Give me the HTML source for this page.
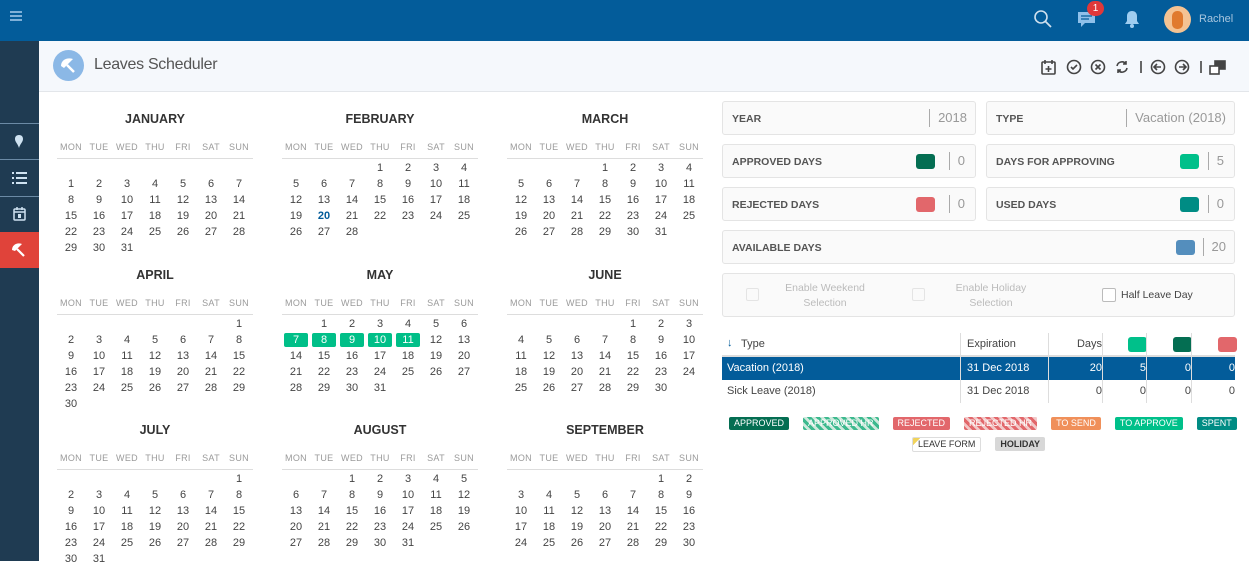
<!DOCTYPE html>
<html><head><meta charset="utf-8"><style>
*{box-sizing:border-box;margin:0;padding:0}
body{width:1249px;height:561px;overflow:hidden;background:#fff;font-family:"Liberation Sans",sans-serif;position:relative;color:#444}
.top{position:absolute;left:0;top:0;width:1249px;height:41px;background:#035c9a}
.side{position:absolute;left:0;top:41px;width:39px;height:520px;background:#1f3b52}
.side .sep{position:absolute;left:0;width:39px;height:1px;background:#6b8aa5}
.hdr{position:absolute;left:39px;top:41px;width:1210px;height:51px;background:#f5f8fc;border-bottom:1px solid #e3e6ea}
.m{position:absolute;width:196px}
.m .t{height:18px;line-height:18px;text-align:center;font-weight:bold;font-size:12.5px;color:#333}
.m .h{margin-top:12px;display:grid;grid-template-columns:repeat(7,28px);font-size:9px;color:#9a9a9a;text-align:center;line-height:14px;border-bottom:1px solid #ddd;padding-bottom:4px;height:19px;letter-spacing:.3px}
.m .d{margin-top:1px;display:grid;grid-template-columns:repeat(7,28px);font-size:11px;text-align:center;line-height:16px;color:#444}
.m .d span{height:16px}
.g{background:#00bf88;color:#fff;border-radius:2px;margin:1px 2px;line-height:14px;height:14px!important}
.box{position:absolute;border:1px solid #e4e4e4;border-radius:3px;background:#fafafa;height:34px;font-size:10.5px;font-weight:bold;color:#555;line-height:34px;padding-left:9px}
.box .v{position:absolute;right:8px;font-weight:normal;color:#999;font-size:13px;border-left:1px solid #aaa;line-height:18px;top:7px;padding-left:8px}
.box .sw{position:absolute;top:9px;width:19px;height:15px;border-radius:3px}
.badge{display:inline-block;font-size:9px;color:#fff;padding:0 5px;height:13px;line-height:13px;border-radius:2px;margin:0 7px}
</style></head><body>
<div class="top">
<div style="position:absolute;left:10px;top:11px;width:12px"><div style="height:2px;background:#7fb0d8;margin-bottom:2px"></div><div style="height:2px;background:#7fb0d8;margin-bottom:2px"></div><div style="height:2px;background:#7fb0d8"></div></div>
<svg style="position:absolute;left:1033px;top:9px" width="20" height="20" viewBox="0 0 20 20"><circle cx="8" cy="8" r="6" fill="none" stroke="#cfe0ee" stroke-width="1.6"/><path d="M12.5 12.5L18 18" stroke="#cfe0ee" stroke-width="1.8"/></svg>
<svg style="position:absolute;left:1077px;top:10px" width="20" height="20" viewBox="0 0 20 20"><path d="M1 2h17v11H8l-4 4v-4H1z" fill="#8fc0ea"/><path d="M4 6h11M4 9h8" stroke="#035c9a" stroke-width="1.3"/></svg>
<div style="position:absolute;left:1087px;top:1px;width:17px;height:15px;border-radius:8px;background:#e0383a;color:#fff;font-size:10px;text-align:center;line-height:15px">1</div>
<svg style="position:absolute;left:1124px;top:10px" width="16" height="18" viewBox="0 0 16 18"><path d="M8 1c-3 0-5 2-5 5v5l-2 3h14l-2-3V6c0-3-2-5-5-5z" fill="#9fcdf0"/><circle cx="8" cy="16" r="2" fill="#9fcdf0"/></svg>
<div style="position:absolute;left:1164px;top:6px;width:27px;height:27px;border-radius:50%;background:#f4c393"><div style="position:absolute;left:8px;top:5px;width:11px;height:18px;border-radius:5px;background:#e07a2e"></div></div>
<div style="position:absolute;left:1199px;top:13px;font-size:11px;color:#a8c6df">Rachel</div>
</div>
<div class="side">
<div class="sep" style="top:82px"></div><div class="sep" style="top:118px"></div><div class="sep" style="top:155px"></div>
<div style="position:absolute;left:0;top:191px;width:39px;height:36px;background:#e0433a"></div>
<svg style="position:absolute;left:13px;top:93px" width="12" height="15" viewBox="0 0 12 15"><path d="M6 1C3 1 2 3 2 5c0 3 3 5 4 9 1-4 4-6 4-9 0-2-1-4-4-4z" fill="#cfe2f1"/></svg>
<svg style="position:absolute;left:12px;top:131px" width="15" height="12" viewBox="0 0 15 12"><path d="M0 1h2M4 1h11M0 6h2M4 6h11M0 11h2M4 11h11" stroke="#cfe2f1" stroke-width="2"/></svg>
<svg style="position:absolute;left:13px;top:166px" width="13" height="14" viewBox="0 0 13 14"><rect x="1" y="2" width="11" height="11" rx="1" fill="none" stroke="#cfe2f1" stroke-width="1.5"/><path d="M1 5h11M4 0v3M9 0v3" stroke="#cfe2f1" stroke-width="1.5"/><rect x="5" y="7" width="3" height="4" fill="#cfe2f1"/></svg>
<svg style="position:absolute;left:11px;top:201px" width="16" height="16" viewBox="0 0 16 16"><path d="M1 8C1 3 6 0 11 2L4 9z" fill="#fff"/><path d="M6 7l7 7" stroke="#fff" stroke-width="2.2"/></svg>
</div>
<div class="hdr">
<div style="position:absolute;left:14px;top:9px;width:31px;height:31px;border-radius:50%;background:#8bb8e6"></div>
<svg style="position:absolute;left:20px;top:15px" width="20" height="20" viewBox="0 0 20 20"><path d="M2 10C2 4 8 1 14 3L5 12z" fill="#fff"/><path d="M8 9l7 7" stroke="#fff" stroke-width="2.5"/></svg>
<div style="position:absolute;left:55px;top:15px;font-size:16px;color:#555;letter-spacing:-.3px">Leaves Scheduler</div>
<svg style="position:absolute;left:1001px;top:17px" width="195" height="18" viewBox="0 0 195 18" fill="none" stroke="#444" stroke-width="1.6">
<rect x="2" y="4" width="13" height="12" rx="1"/><path d="M5 2v4M12 2v4M8.5 8v6M5.5 11h6"/>
<circle cx="34" cy="9" r="6.5"/><path d="M31 9l2 2 4-4"/>
<circle cx="58" cy="9" r="6.5"/><path d="M55.5 6.5l5 5M60.5 6.5l-5 5"/>
<path d="M77 8a5 5 0 0 1 9-2M87 10a5 5 0 0 1-9 2M86 3v3h-3M78 15v-3h3"/>
<path d="M101 3v12"/>
<circle cx="118" cy="9" r="6.5"/><path d="M121 9h-6M117 6l-3 3 3 3"/>
<circle cx="142" cy="9" r="6.5"/><path d="M139 9h6M143 6l3 3-3 3"/>
<path d="M161 3v12"/>
<rect x="175" y="3" width="10" height="8" fill="#444"/><rect x="170" y="8" width="9" height="8" fill="#fff"/>
</svg>
</div>

<div class="m" style="left:57px;top:110px"><div class="t">JANUARY</div><div class="h"><span>MON</span><span>TUE</span><span>WED</span><span>THU</span><span>FRI</span><span>SAT</span><span>SUN</span></div><div class="d">
<span></span><span></span><span></span><span></span><span></span><span></span><span></span>
<span>1</span><span>2</span><span>3</span><span>4</span><span>5</span><span>6</span><span>7</span>
<span>8</span><span>9</span><span>10</span><span>11</span><span>12</span><span>13</span><span>14</span>
<span>15</span><span>16</span><span>17</span><span>18</span><span>19</span><span>20</span><span>21</span>
<span>22</span><span>23</span><span>24</span><span>25</span><span>26</span><span>27</span><span>28</span>
<span>29</span><span>30</span><span>31</span></div></div>

<div class="m" style="left:282px;top:110px"><div class="t">FEBRUARY</div><div class="h"><span>MON</span><span>TUE</span><span>WED</span><span>THU</span><span>FRI</span><span>SAT</span><span>SUN</span></div><div class="d">
<span></span><span></span><span></span><span>1</span><span>2</span><span>3</span><span>4</span>
<span>5</span><span>6</span><span>7</span><span>8</span><span>9</span><span>10</span><span>11</span>
<span>12</span><span>13</span><span>14</span><span>15</span><span>16</span><span>17</span><span>18</span>
<span>19</span><span style="color:#035c9a;font-weight:bold">20</span><span>21</span><span>22</span><span>23</span><span>24</span><span>25</span>
<span>26</span><span>27</span><span>28</span></div></div>

<div class="m" style="left:507px;top:110px"><div class="t">MARCH</div><div class="h"><span>MON</span><span>TUE</span><span>WED</span><span>THU</span><span>FRI</span><span>SAT</span><span>SUN</span></div><div class="d">
<span></span><span></span><span></span><span>1</span><span>2</span><span>3</span><span>4</span>
<span>5</span><span>6</span><span>7</span><span>8</span><span>9</span><span>10</span><span>11</span>
<span>12</span><span>13</span><span>14</span><span>15</span><span>16</span><span>17</span><span>18</span>
<span>19</span><span>20</span><span>21</span><span>22</span><span>23</span><span>24</span><span>25</span>
<span>26</span><span>27</span><span>28</span><span>29</span><span>30</span><span>31</span></div></div>

<div class="m" style="left:57px;top:266px"><div class="t">APRIL</div><div class="h"><span>MON</span><span>TUE</span><span>WED</span><span>THU</span><span>FRI</span><span>SAT</span><span>SUN</span></div><div class="d">
<span></span><span></span><span></span><span></span><span></span><span></span><span>1</span>
<span>2</span><span>3</span><span>4</span><span>5</span><span>6</span><span>7</span><span>8</span>
<span>9</span><span>10</span><span>11</span><span>12</span><span>13</span><span>14</span><span>15</span>
<span>16</span><span>17</span><span>18</span><span>19</span><span>20</span><span>21</span><span>22</span>
<span>23</span><span>24</span><span>25</span><span>26</span><span>27</span><span>28</span><span>29</span>
<span>30</span></div></div>

<div class="m" style="left:282px;top:266px"><div class="t">MAY</div><div class="h"><span>MON</span><span>TUE</span><span>WED</span><span>THU</span><span>FRI</span><span>SAT</span><span>SUN</span></div><div class="d">
<span></span><span>1</span><span>2</span><span>3</span><span>4</span><span>5</span><span>6</span>
<span class="g">7</span><span class="g">8</span><span class="g">9</span><span class="g">10</span><span class="g">11</span><span>12</span><span>13</span>
<span>14</span><span>15</span><span>16</span><span>17</span><span>18</span><span>19</span><span>20</span>
<span>21</span><span>22</span><span>23</span><span>24</span><span>25</span><span>26</span><span>27</span>
<span>28</span><span>29</span><span>30</span><span>31</span></div></div>

<div class="m" style="left:507px;top:266px"><div class="t">JUNE</div><div class="h"><span>MON</span><span>TUE</span><span>WED</span><span>THU</span><span>FRI</span><span>SAT</span><span>SUN</span></div><div class="d">
<span></span><span></span><span></span><span></span><span>1</span><span>2</span><span>3</span>
<span>4</span><span>5</span><span>6</span><span>7</span><span>8</span><span>9</span><span>10</span>
<span>11</span><span>12</span><span>13</span><span>14</span><span>15</span><span>16</span><span>17</span>
<span>18</span><span>19</span><span>20</span><span>21</span><span>22</span><span>23</span><span>24</span>
<span>25</span><span>26</span><span>27</span><span>28</span><span>29</span><span>30</span></div></div>

<div class="m" style="left:57px;top:421px"><div class="t">JULY</div><div class="h"><span>MON</span><span>TUE</span><span>WED</span><span>THU</span><span>FRI</span><span>SAT</span><span>SUN</span></div><div class="d">
<span></span><span></span><span></span><span></span><span></span><span></span><span>1</span>
<span>2</span><span>3</span><span>4</span><span>5</span><span>6</span><span>7</span><span>8</span>
<span>9</span><span>10</span><span>11</span><span>12</span><span>13</span><span>14</span><span>15</span>
<span>16</span><span>17</span><span>18</span><span>19</span><span>20</span><span>21</span><span>22</span>
<span>23</span><span>24</span><span>25</span><span>26</span><span>27</span><span>28</span><span>29</span>
<span>30</span><span>31</span></div></div>

<div class="m" style="left:282px;top:421px"><div class="t">AUGUST</div><div class="h"><span>MON</span><span>TUE</span><span>WED</span><span>THU</span><span>FRI</span><span>SAT</span><span>SUN</span></div><div class="d">
<span></span><span></span><span>1</span><span>2</span><span>3</span><span>4</span><span>5</span>
<span>6</span><span>7</span><span>8</span><span>9</span><span>10</span><span>11</span><span>12</span>
<span>13</span><span>14</span><span>15</span><span>16</span><span>17</span><span>18</span><span>19</span>
<span>20</span><span>21</span><span>22</span><span>23</span><span>24</span><span>25</span><span>26</span>
<span>27</span><span>28</span><span>29</span><span>30</span><span>31</span></div></div>

<div class="m" style="left:507px;top:421px"><div class="t">SEPTEMBER</div><div class="h"><span>MON</span><span>TUE</span><span>WED</span><span>THU</span><span>FRI</span><span>SAT</span><span>SUN</span></div><div class="d">
<span></span><span></span><span></span><span></span><span></span><span>1</span><span>2</span>
<span>3</span><span>4</span><span>5</span><span>6</span><span>7</span><span>8</span><span>9</span>
<span>10</span><span>11</span><span>12</span><span>13</span><span>14</span><span>15</span><span>16</span>
<span>17</span><span>18</span><span>19</span><span>20</span><span>21</span><span>22</span><span>23</span>
<span>24</span><span>25</span><span>26</span><span>27</span><span>28</span><span>29</span><span>30</span></div></div>

<div class="box" style="left:722px;top:101px;width:254px">YEAR<span class="v">2018</span></div>
<div class="box" style="left:986px;top:101px;width:249px">TYPE<span class="v">Vacation (2018)</span></div>
<div class="box" style="left:722px;top:144px;width:254px">APPROVED DAYS<span class="sw" style="left:193px;background:#046e52"></span><span class="v" style="right:10px">0</span></div>
<div class="box" style="left:986px;top:144px;width:249px">DAYS FOR APPROVING<span class="sw" style="left:193px;background:#00c08a"></span><span class="v" style="right:10px">5</span></div>
<div class="box" style="left:722px;top:187px;width:254px">REJECTED DAYS<span class="sw" style="left:193px;background:#e2676b"></span><span class="v" style="right:10px">0</span></div>
<div class="box" style="left:986px;top:187px;width:249px">USED DAYS<span class="sw" style="left:193px;background:#008c84"></span><span class="v" style="right:10px">0</span></div>
<div class="box" style="left:722px;top:230px;width:513px">AVAILABLE DAYS<span class="sw" style="left:453px;background:#548ebd"></span><span class="v">20</span></div>

<div style="position:absolute;left:722px;top:273px;width:513px;height:44px;border:1px solid #e4e4e4;border-radius:3px;background:#fafafa;font-size:10.5px;color:#bbb">
<div style="position:absolute;left:23px;top:14px;width:13px;height:13px;border:1px solid #e4e4e4;border-radius:2px"></div>
<div style="position:absolute;left:50px;top:7px;width:104px;text-align:center;line-height:15px">Enable Weekend<br>Selection</div>
<div style="position:absolute;left:189px;top:14px;width:13px;height:13px;border:1px solid #e4e4e4;border-radius:2px"></div>
<div style="position:absolute;left:216px;top:7px;width:104px;text-align:center;line-height:15px">Enable Holiday<br>Selection</div>
<div style="position:absolute;left:379px;top:14px;width:14px;height:14px;border:1px solid #bbb;border-radius:2px;background:#fff"></div>
<div style="position:absolute;left:398px;top:15px;color:#444">Half Leave Day</div>
</div>

<div style="position:absolute;left:722px;top:333px;width:513px;font-size:11px;color:#444">
<div style="position:relative;height:24px;border-bottom:2px solid #ddd">
<span style="position:absolute;left:5px;top:4px;color:#035c9a">&#8595;</span><span style="position:absolute;left:19px;top:5px">Type</span>
<span style="position:absolute;left:245px;top:5px">Expiration</span>
<span style="position:absolute;right:133px;top:5px">Days</span>
<span style="position:absolute;left:406px;top:4px;width:19px;height:15px;border-radius:3px;background:#00c08a"></span>
<span style="position:absolute;left:451px;top:4px;width:19px;height:15px;border-radius:3px;background:#046e52"></span>
<span style="position:absolute;left:496px;top:4px;width:19px;height:15px;border-radius:3px;background:#e2676b"></span>
</div>
<div style="position:relative;height:23px;background:#035c9a;color:#fff;line-height:23px">
<span style="position:absolute;left:5px">Vacation (2018)</span><span style="position:absolute;left:245px">31 Dec 2018</span>
<span style="position:absolute;right:133px">20</span><span style="position:absolute;right:89px">5</span><span style="position:absolute;right:44px">0</span><span style="position:absolute;right:0px">0</span>
</div>
<div style="position:relative;height:23px;line-height:23px">
<span style="position:absolute;left:5px">Sick Leave (2018)</span><span style="position:absolute;left:245px">31 Dec 2018</span>
<span style="position:absolute;right:133px">0</span><span style="position:absolute;right:89px">0</span><span style="position:absolute;right:44px">0</span><span style="position:absolute;right:0px">0</span>
</div>
<div style="position:absolute;left:238px;top:0;width:1px;height:70px;background:#ddd"></div>
<div style="position:absolute;left:326px;top:0;width:1px;height:70px;background:#ddd"></div>
<div style="position:absolute;left:380px;top:0;width:1px;height:70px;background:#ddd"></div>
<div style="position:absolute;left:424px;top:0;width:1px;height:70px;background:#ddd"></div>
<div style="position:absolute;left:469px;top:0;width:1px;height:70px;background:#ddd"></div>
</div>

<div style="position:absolute;left:722px;top:413px;width:513px;text-align:center;white-space:nowrap">
<span class="badge" style="background:#046e52">APPROVED</span><span class="badge" style="background:repeating-linear-gradient(45deg,#3cb98e 0 3px,#cfe9dd 3px 6px)">APPROVED HR</span><span class="badge" style="background:#e2676b">REJECTED</span><span class="badge" style="background:repeating-linear-gradient(45deg,#e2676b 0 3px,#f2c8c8 3px 6px)">REJECTED HR</span><span class="badge" style="background:#f0905a">TO SEND</span><span class="badge" style="background:#00c08a">TO APPROVE</span><span class="badge" style="background:#008c84">SPENT</span>
</div>
<div style="position:absolute;left:722px;top:434px;width:513px;text-align:center;white-space:nowrap">
<span class="badge" style="color:#333;background:linear-gradient(135deg,#f1d35a 0 5px,#fff 5px);border:1px solid #ddd;height:15px;line-height:13px">LEAVE FORM</span><span class="badge" style="color:#333;background:#d8d8d8;font-weight:bold;height:14px;line-height:14px">HOLIDAY</span>
</div>
</body></html>
